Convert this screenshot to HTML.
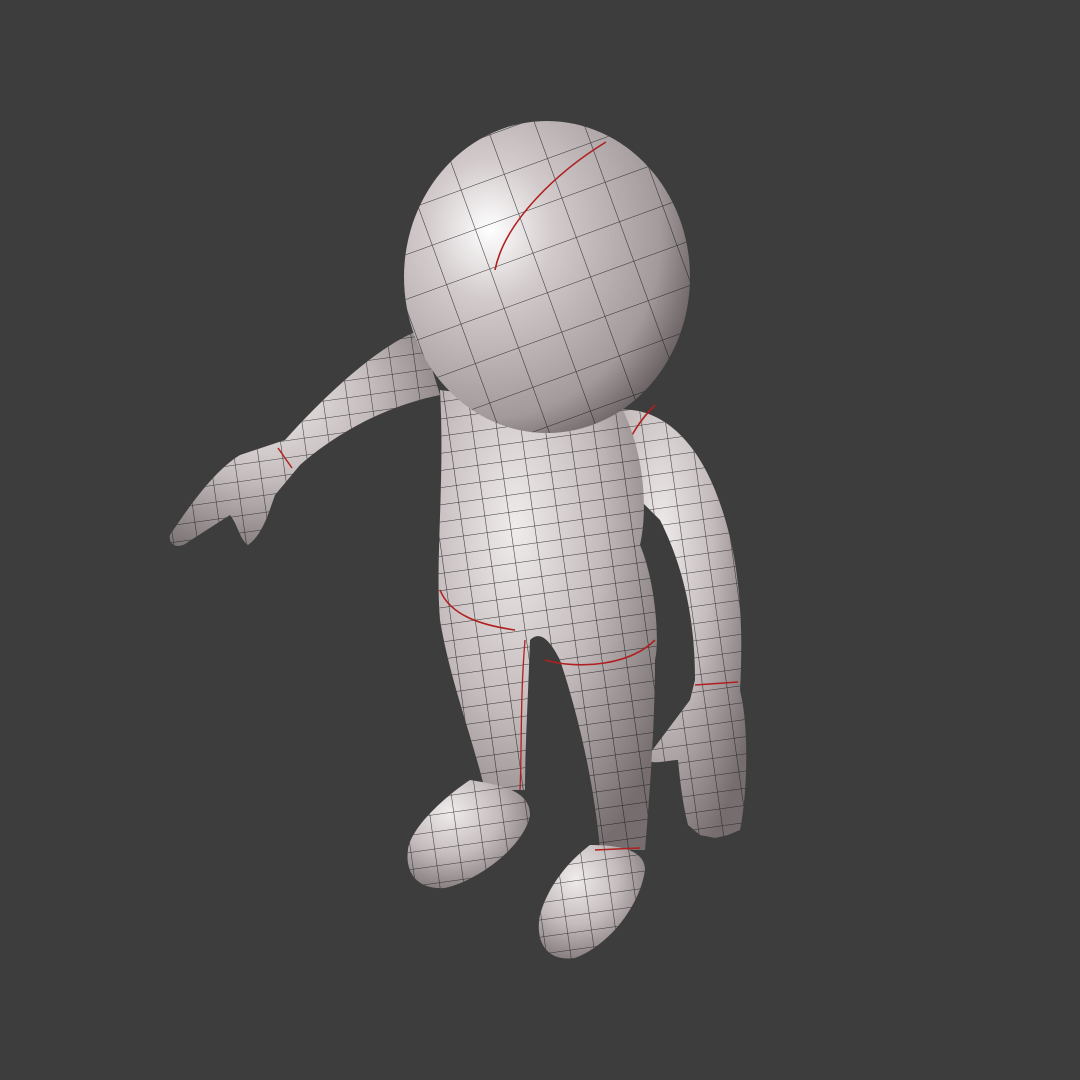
<!DOCTYPE html>
<html><head><style>html,body{margin:0;padding:0;background:#3d3d3d}svg{display:block}</style></head>
<body>
<svg width="1080" height="1080" viewBox="0 0 1080 1080" xmlns="http://www.w3.org/2000/svg">
<defs>
<radialGradient id="g" cx="0.35" cy="0.3" r="0.8">
<stop offset="0" stop-color="#f0ecec"/>
<stop offset="0.5" stop-color="#c4bbbc"/>
<stop offset="1" stop-color="#756d6e"/>
</radialGradient>
<radialGradient id="h" cx="0.3" cy="0.35" r="0.75">
<stop offset="0" stop-color="#ffffff"/>
<stop offset="0.3" stop-color="#d2cacb"/>
<stop offset="0.8" stop-color="#a39a9c"/>
<stop offset="1" stop-color="#6a6263"/>
</radialGradient>
<pattern id="grid" width="24" height="17" patternUnits="userSpaceOnUse" patternTransform="rotate(-8)">
<path d="M0 0H24M0 0V17" stroke="#1a1a1a" stroke-width="1.1" fill="none"/>
</pattern>
<pattern id="gridh" width="46" height="42" patternUnits="userSpaceOnUse" patternTransform="rotate(-20)">
<path d="M0 0H46M0 0V42" stroke="#1a1a1a" stroke-width="1.1" fill="none"/>
</pattern>
</defs>
<rect width="1080" height="1080" fill="#3d3d3d"/>

<g>
<path d="M420 330 C380 345 330 390 285 440 L240 455 C215 470 190 505 170 535 C168 545 178 550 188 542 L230 515 C238 525 240 540 248 545 C262 535 268 515 275 495 L300 465 C340 430 390 405 440 395 Z" fill="url(#g)"/>
<path d="M420 330 C380 345 330 390 285 440 L240 455 C215 470 190 505 170 535 C168 545 178 550 188 542 L230 515 C238 525 240 540 248 545 C262 535 268 515 275 495 L300 465 C340 430 390 405 440 395 Z" fill="url(#grid)" opacity="0.8"/>
<path d="M278 448 L292 468" stroke="#b02020" stroke-width="1.5"/>
</g>

<g>
<path d="M615 410 C660 405 695 440 715 490 C735 540 745 600 740 690 L742 700 C748 730 748 790 740 830 L728 835 L715 838 L700 835 L688 825 C682 800 680 780 678 760 C668 760 655 765 645 760 C660 740 675 720 690 700 L695 680 C695 610 680 560 660 520 L620 480 Z" fill="url(#g)"/>
<path d="M615 410 C660 405 695 440 715 490 C735 540 745 600 740 690 L742 700 C748 730 748 790 740 830 L728 835 L715 838 L700 835 L688 825 C682 800 680 780 678 760 C668 760 655 765 645 760 C660 740 675 720 690 700 L695 680 C695 610 680 560 660 520 L620 480 Z" fill="url(#grid)" opacity="0.8"/>
<path d="M655 405 C630 430 618 460 615 490" stroke="#b02020" stroke-width="1.6" fill="none"/>
<path d="M695 685 L738 682" stroke="#b02020" stroke-width="1.5"/>
</g>

<path d="M440 390 C470 395 560 395 620 405 C640 440 650 500 640 545 C655 580 660 640 655 660 C655 720 650 790 645 850 L600 850 C595 790 580 720 560 660 C550 640 540 630 530 640 C528 700 525 750 525 790 L485 790 C470 730 450 680 440 620 C435 560 445 480 440 390 Z" fill="url(#g)"/>
<path d="M440 390 C470 395 560 395 620 405 C640 440 650 500 640 545 C655 580 660 640 655 660 C655 720 650 790 645 850 L600 850 C595 790 580 720 560 660 C550 640 540 630 530 640 C528 700 525 750 525 790 L485 790 C470 730 450 680 440 620 C435 560 445 480 440 390 Z" fill="url(#grid)" opacity="0.85"/>
<path d="M440 590 C450 615 480 625 515 630" stroke="#b02020" stroke-width="1.6" fill="none"/>
<path d="M545 660 C580 670 630 665 655 640" stroke="#b02020" stroke-width="1.6" fill="none"/>
<path d="M525 640 C520 700 522 750 520 790" stroke="#b02020" stroke-width="1.3" fill="none"/>

<g>
<path d="M470 780 C500 785 530 790 530 815 C525 845 480 880 445 888 C415 890 405 870 408 850 C410 830 440 800 470 780 Z" fill="url(#g)"/>
<path d="M470 780 C500 785 530 790 530 815 C525 845 480 880 445 888 C415 890 405 870 408 850 C410 830 440 800 470 780 Z" fill="url(#grid)" opacity="0.8"/>
<path d="M590 845 C620 845 645 850 645 870 C640 905 610 945 575 958 C545 962 535 940 540 915 C548 885 570 860 590 845 Z" fill="url(#g)"/>
<path d="M590 845 C620 845 645 850 645 870 C640 905 610 945 575 958 C545 962 535 940 540 915 C548 885 570 860 590 845 Z" fill="url(#grid)" opacity="0.8"/>
<path d="M595 850 L640 848" stroke="#b02020" stroke-width="1.5"/>
</g>

<g>
<ellipse cx="547" cy="277" rx="143" ry="156" fill="url(#h)"/>
<ellipse cx="547" cy="277" rx="143" ry="156" fill="url(#gridh)" opacity="0.85"/>
<path d="M606 142 C560 170 505 220 495 270" stroke="#b02020" stroke-width="1.6" fill="none"/>
</g>
</svg>
</body></html>
